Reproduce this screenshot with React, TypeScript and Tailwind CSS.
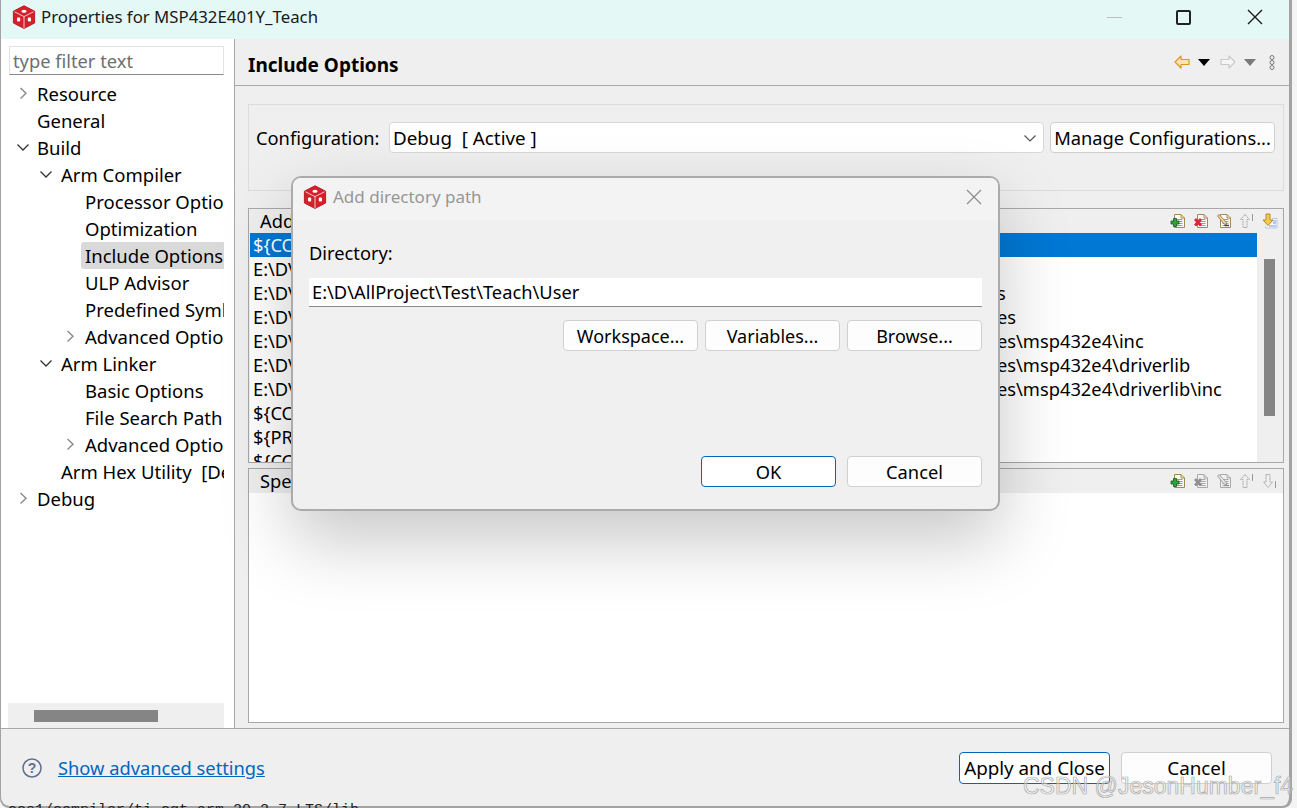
import React from "react";

const FONT = "[font-family:'Noto_Sans','Liberation_Sans',sans-serif]";

function Logo({ size = 24 }: { size?: number }) {
  return (
    <svg width={size} height={size} viewBox="0 0 24 24" className="shrink-0">
      <path d="M12 .8 22.6 6.2V18L12 23.4 1.4 18V6.2Z" fill="#d2212c" stroke="#c21a25" strokeLinejoin="round" />
      <path d="M2.5 6.8 12 11.6 21.5 6.8" fill="none" stroke="#f7c9cb" strokeWidth="1" />
      <path d="M12 11.6V23" fill="none" stroke="#f7c9cb" strokeWidth="1" />
      <ellipse cx="12" cy="6.2" rx="2.6" ry="1.5" fill="#fff" />
      <rect x="5" y="12.5" width="3.2" height="4" rx="1" fill="#fff" />
      <rect x="15.8" y="12.5" width="3.2" height="4" rx="1" fill="#fff" />
    </svg>
  );
}

function Chevron({ dir }: { dir: "right" | "down" }) {
  return (
    <svg width="14" height="14" viewBox="0 0 14 14" className="shrink-0">
      {dir === "right" ? (
        <path d="M4.5 2 10 7.2 4.5 12.4" fill="none" stroke="#8a8a8a" strokeWidth="1.4" />
      ) : (
        <path d="M1.5 4.5 7 10 12.5 4.5" fill="none" stroke="#333" strokeWidth="1.3" />
      )}
    </svg>
  );
}

type Row = { label: string; level: number; arrow?: "right" | "down"; selected?: boolean };
const tree: Row[] = [
  { label: "Resource", level: 0, arrow: "right" },
  { label: "General", level: 0 },
  { label: "Build", level: 0, arrow: "down" },
  { label: "Arm Compiler", level: 1, arrow: "down" },
  { label: "Processor Options", level: 2 },
  { label: "Optimization", level: 2 },
  { label: "Include Options", level: 2, selected: true },
  { label: "ULP Advisor", level: 2 },
  { label: "Predefined Symbols", level: 2 },
  { label: "Advanced Options", level: 2, arrow: "right" },
  { label: "Arm Linker", level: 1, arrow: "down" },
  { label: "Basic Options", level: 2 },
  { label: "File Search Path", level: 2 },
  { label: "Advanced Options", level: 2, arrow: "right" },
  { label: "Arm Hex Utility  [Default]", level: 1 },
  { label: "Debug", level: 0, arrow: "right" },
];

function TreeRow({ r }: { r: Row }) {
  const pad = r.level === 0 ? "pl-[28px]" : r.level === 1 ? "pl-[52px]" : "pl-[76px]";
  const arrowPos = r.level === 0 ? "left-[7px]" : r.level === 1 ? "left-[30px]" : "left-[54px]";
  return (
    <div className={`relative h-[27px] flex items-center whitespace-pre overflow-hidden text-black text-[18.5px] ${pad}`}>
      {r.selected && <div className="absolute left-[72px] right-0 top-0 bottom-0 bg-[#d9d9d9] rounded-l-[3px]" />}
      {r.arrow && (
        <span className={`absolute top-[6px] ${arrowPos}`}>
          <Chevron dir={r.arrow} />
        </span>
      )}
      <span className="relative">{r.label}</span>
    </div>
  );
}

function Btn({ children, w, primary }: { children: React.ReactNode; w: string; primary?: boolean }) {
  return (
    <div
      className={`${w} h-[31px] flex items-center justify-center rounded-[4px] whitespace-nowrap text-black ${
        primary ? "border border-[#0067c0] bg-white" : "border border-[#d0d0d0] bg-[#fdfdfd]"
      }`}
    >
      {children}
    </div>
  );
}

function Doc({ gray, children }: { gray?: boolean; children?: React.ReactNode }) {
  const edge = gray ? "#a9a9a9" : "#a08a4e";
  const line = gray ? "#a9a9a9" : "#7f9ed6";
  return (
    <svg width="16" height="16" viewBox="0 0 16 16">
      <path d="M4.5 1.5H11L14.5 5V14.5H4.5Z" fill={gray ? "#f0f0f0" : "#fbfbf6"} stroke={edge} />
      <path d="M11 1.5V5H14.5" fill="none" stroke={edge} />
      <path d="M6.5 6.5H12.5M6.5 8.5H12.5M6.5 10.5H12.5M6.5 12.5H12.5" stroke={line} />
      {children}
    </svg>
  );
}

const Plus = () => (
  <Doc>
    <path d="M3.5 5.5H6.5V8H9V11H6.5V13.5H3.5V11H1V8H3.5Z" fill="#2fa33a" stroke="#0d5a18" strokeWidth=".8" />
  </Doc>
);
const Del = ({ gray }: { gray?: boolean }) => (
  <Doc gray={gray}>
    <path
      d="M1.5 7 3 5.5 5 7.5 7 5.5 8.5 7 6.5 9.2 8.5 11.5 7 13 5 11 3 13 1.5 11.5 3.5 9.2Z"
      fill={gray ? "#8f8f8f" : "#e0243a"}
      stroke={gray ? "#8f8f8f" : "#d31b33"}
      strokeWidth=".8"
    />
  </Doc>
);
const Edit = ({ gray }: { gray?: boolean }) => (
  <Doc gray={gray}>
    <path d="M1.5 3 3 1.5 10 9 10.5 11.5 8 11Z" fill={gray ? "#e6e6e6" : "#f2d79c"} stroke={gray ? "#9a9a9a" : "#9b7a3d"} strokeWidth=".9" />
    <path d="M8.5 12.5H13" stroke={gray ? "#8f8f8f" : "#33435f"} strokeWidth="1.4" />
  </Doc>
);
const Up = () => (
  <svg width="16" height="16" viewBox="0 0 16 16">
    <path d="M6 1.5 1.5 6.5H4V14.5H8V6.5H10.5Z" fill="none" stroke="#aaa" strokeDasharray="2 .6" />
    <path d="M13.5 1V8" stroke="#999" />
  </svg>
);
const Down = ({ gray }: { gray?: boolean }) => (
  <svg width="16" height="16" viewBox="0 0 16 16">
    {gray ? (
      <>
        <path d="M4 1.5V9H1.5L6 14.5 10.5 9H8V1.5Z" fill="none" stroke="#aaa" strokeDasharray="2 .6" />
        <path d="M13.5 8V15" stroke="#999" />
      </>
    ) : (
      <>
        <path d="M10 5.5H15V15H3.5V13" fill="#f1f4fb" stroke="#b9c9e6" />
        <path d="M11 8H14M11 10H14M7 13H14" stroke="#7f9ed6" />
        <path d="M4 1V7H1L6 12.5 11 7H8V1Z" fill="#f6c94e" stroke="#b78a1c" />
      </>
    )}
  </svg>
);

function Toolbar({ disabled }: { disabled?: boolean }) {
  return (
    <div className="flex items-center gap-[7px]">
      <Plus />
      <Del gray={disabled} />
      <Edit gray={disabled} />
      <Up />
      <Down gray={disabled} />
    </div>
  );
}

const rows: { left: string; tail?: string }[] = [
  { left: "E:\\DV" },
  { left: "E:\\DV", tail: "s" },
  { left: "E:\\DV", tail: "es" },
  { left: "E:\\DV", tail: "es\\msp432e4\\inc" },
  { left: "E:\\DV", tail: "es\\msp432e4\\driverlib" },
  { left: "E:\\DV", tail: "es\\msp432e4\\driverlib\\inc" },
  { left: "${CC" },
  { left: "${PR" },
  { left: "${CC" },
];

export default function App() {
  return (
    <div className={`relative w-[1297px] h-[808px] overflow-hidden bg-[#f4f4f4] text-[18.3px] leading-[24px] ${FONT}`}>
      <div className="relative w-[1292px] h-[806px] flex flex-col bg-[#efefef] border-r-[3px] border-l border-[#a3a3a3] rounded-b-[9px] shadow-[0_2px_0_#a3a3a3] overflow-hidden">
        {/* title bar */}
        <div className="h-[39px] shrink-0 bg-[#e4f8f6] flex items-center pl-[11px] pr-[26px] pb-[5px]">
          <Logo />
          <span className="ml-[5px] text-[16.8px] text-[#1a1a1a] whitespace-nowrap">Properties for MSP432E401Y_Teach</span>
          <div className="ml-auto flex items-center">
            <div className="w-[15px] h-px bg-[#bdbdbd]" />
            <div className="ml-[54px] w-[15px] h-[15px] border-2 border-[#222] rounded-[2px]" />
            <svg width="16" height="16" viewBox="0 0 16 16" className="ml-[56px]">
              <path d="M1 1 15 15M15 1 1 15" stroke="#1a1a1a" strokeWidth="1.4" />
            </svg>
          </div>
        </div>

        <div className="flex-1 flex min-h-0">
          {/* sidebar */}
          <div className="w-[234px] shrink-0 bg-white border-r border-[#a8a8a8] flex flex-col pt-[7px] pl-[8px] pr-[10px]">
            <div className="h-[29px] shrink-0 bg-white border border-[#e3e3e3] border-b-[#8a8a8a] px-[3px] flex items-center text-[#6e6e6e] whitespace-nowrap">
              type filter text
            </div>
            <div className="mt-[5px] flex-1 min-h-0">
              {tree.map((r, i) => (
                <TreeRow key={i} r={r} />
              ))}
            </div>
            <div className="h-[25px] shrink-0 -ml-px bg-[#efefef] flex items-center pl-[26px]">
              <div className="w-[124px] h-[12px] bg-[#858585]" />
            </div>
          </div>

          {/* main */}
          <div className="flex-1 min-w-0 flex flex-col pr-[5px]">
            <div className="h-[47px] shrink-0 border-b border-[#a8a8a8] flex items-center pl-[13px] -mr-[5px] pr-[14px]">
              <span className="relative top-[3px] text-[19px] font-bold text-black">Include Options</span>
              <div className="ml-auto flex items-center">
                <svg width="16" height="14" viewBox="0 0 16 14">
                  <path d="M7 1 1 7 7 13V9.5H15V4.5H7Z" fill="#fbe6a8" stroke="#d9962a" strokeWidth="1.2" strokeLinejoin="round" />
                </svg>
                <svg width="12" height="7" viewBox="0 0 12 7" className="ml-[8px]">
                  <path d="M0 0H12L6 7Z" fill="#000" />
                </svg>
                <svg width="16" height="14" viewBox="0 0 16 14" className="ml-[10px]">
                  <path d="M9 1 15 7 9 13V9.5H1V4.5H9Z" fill="#f6f6f6" stroke="#c9c9c9" strokeWidth="1.2" strokeLinejoin="round" />
                </svg>
                <svg width="12" height="7" viewBox="0 0 12 7" className="ml-[8px]">
                  <path d="M0 0H12L6 7Z" fill="#7a7a7a" />
                </svg>
                <svg width="6" height="15" viewBox="0 0 6 15" className="ml-[13px]">
                  <circle cx="3" cy="2.5" r="2" fill="none" stroke="#7a7a7a" />
                  <circle cx="3" cy="7.5" r="2" fill="none" stroke="#7a7a7a" />
                  <circle cx="3" cy="12.5" r="2" fill="none" stroke="#7a7a7a" />
                </svg>
              </div>
            </div>

            <div className="pl-[13px] pt-[18px] flex flex-col flex-1 min-h-0 pb-[5px]">
              {/* config group */}
              <div className="h-[87px] shrink-0 border border-[#dcdcdc] flex items-center pl-[7px] pr-[8px] pb-[20px]">
                <span className="w-[124px] shrink-0 text-black whitespace-nowrap">Configuration:</span>
                <div className="ml-[9px] flex-1 h-[31px] bg-white border border-[#d8d8d8] rounded-[4px] flex items-center pl-[3px] pr-[6px] text-black whitespace-pre text-[18.8px]">
                  Debug  [ Active ]
                  <svg width="14" height="14" viewBox="0 0 14 14" className="ml-auto">
                    <path d="M1.5 4.5 7 10 12.5 4.5" fill="none" stroke="#555" strokeWidth="1.2" />
                  </svg>
                </div>
                <div className="ml-[6px]">
                  <Btn w="w-[225px]">Manage Configurations...</Btn>
                </div>
              </div>

              {/* include table */}
              <div className="mt-[17px] h-[255px] shrink-0 border border-[#a8a8a8] flex flex-col overflow-hidden">
                <div className="h-[24px] shrink-0 flex items-center pl-[11px] pr-[5px] text-black">
                  Add dir to #include search path
                  <div className="ml-auto"><Toolbar /></div>
                </div>
                <div className="flex-1 min-h-0 flex">
                  <div className="w-[1007px] ml-px bg-white overflow-hidden text-black">
                    <div className="h-[24px] bg-[#0078d4] text-white pl-[3px] flex items-center whitespace-pre">{"${COM_TI_SIMPLELINK}"}</div>
                    {rows.map((r, i) => (
                      <div key={i} className="h-[24px] pl-[3px] flex items-center whitespace-pre">
                        <span className="w-[744px] shrink-0">{r.left}</span>
                        {r.tail && <span>{r.tail}</span>}
                      </div>
                    ))}
                  </div>
                  <div className="flex-1 pt-[26px] pl-[7px]">
                    <div className="w-[11px] h-[157px] bg-[#858585]" />
                  </div>
                </div>
              </div>

              {/* symbols table */}
              <div className="mt-[5px] flex-1 min-h-0 border border-[#a8a8a8] flex flex-col">
                <div className="h-[24px] shrink-0 flex items-center pl-[11px] pr-[5px] text-black">
                  Specify the path
                  <div className="ml-auto"><Toolbar disabled /></div>
                </div>
                <div className="flex-1 bg-white" />
              </div>
            </div>
          </div>
        </div>

        {/* footer */}
        <div className="h-[78px] shrink-0 border-t border-[#a8a8a8] flex items-center pl-[21px] pr-[17px] pt-[1px]">
          <svg width="20" height="20" viewBox="0 0 20 20">
            <circle cx="10" cy="10" r="9" fill="none" stroke="#5f6f8f" strokeWidth="1.5" />
            <text x="10" y="15" textAnchor="middle" fontSize="14" fontWeight="700" fill="#5f6f8f" fontFamily="Liberation Sans">?</text>
          </svg>
          <span className="ml-[16px] text-[#0067c0] underline whitespace-nowrap">Show advanced settings</span>
          <div className="ml-auto flex gap-[11px] text-[18.8px]">
            <Btn w="w-[151px] !h-[32px]" primary>Apply and Close</Btn>
            <Btn w="w-[151px] !h-[32px]">Cancel</Btn>
          </div>
        </div>
      </div>

      {/* text of the window behind, showing under the bottom edge */}
      <div className="absolute left-[8px] top-[803px] text-[15px] leading-[15px] text-[#222] whitespace-pre [font-family:'Liberation_Mono',monospace]">
        ccs1/compiler/ti-cgt-arm_20.2.7.LTS/lib
      </div>

      {/* dialog */}
      <div className="absolute left-[291px] top-[176px] w-[709px] h-[335px] bg-[#f0f0f0] border-2 border-[#ababab] rounded-[10px] shadow-[0_30px_70px_rgba(0,0,0,0.22)] flex flex-col overflow-hidden">
        <div className="h-[42px] shrink-0 bg-[#f3f3f3] flex items-center pl-[10px] pr-[16px] pb-[4px]">
          <Logo />
          <span className="ml-[6px] text-[17px] text-[#969696] whitespace-nowrap">Add directory path</span>
          <svg width="16" height="16" viewBox="0 0 16 16" className="ml-auto">
            <path d="M1 1 15 15M15 1 1 15" stroke="#8f8f8f" strokeWidth="1.3" />
          </svg>
        </div>
        <div className="flex-1 flex flex-col pl-[16px] pr-[16px] text-black">
          <div className="mt-[21px] h-[24px] flex items-center">Directory:</div>
          <div className="mt-[13px] h-[29px] bg-white border-b border-[#8a8a8a] pl-[3px] flex items-center whitespace-nowrap">
            E:\D\AllProject\Test\Teach\User
          </div>
          <div className="mt-[13px] flex justify-end gap-[7px] text-[18px]">
            <Btn w="w-[135px]">Workspace...</Btn>
            <Btn w="w-[135px]">Variables...</Btn>
            <Btn w="w-[135px]">Browse...</Btn>
          </div>
          <div className="mt-[105px] flex justify-end gap-[11px]">
            <Btn w="w-[135px]" primary>OK</Btn>
            <Btn w="w-[135px]">Cancel</Btn>
          </div>
        </div>
      </div>

      <div className="absolute left-[1023px] top-[770px] text-[23px] leading-[32px] whitespace-nowrap text-white/40 [-webkit-text-stroke:0.7px_#a9a9a9] [font-family:'Liberation_Sans',sans-serif]">
        CSDN @JesonHumber_f4
      </div>
    </div>
  );
}
